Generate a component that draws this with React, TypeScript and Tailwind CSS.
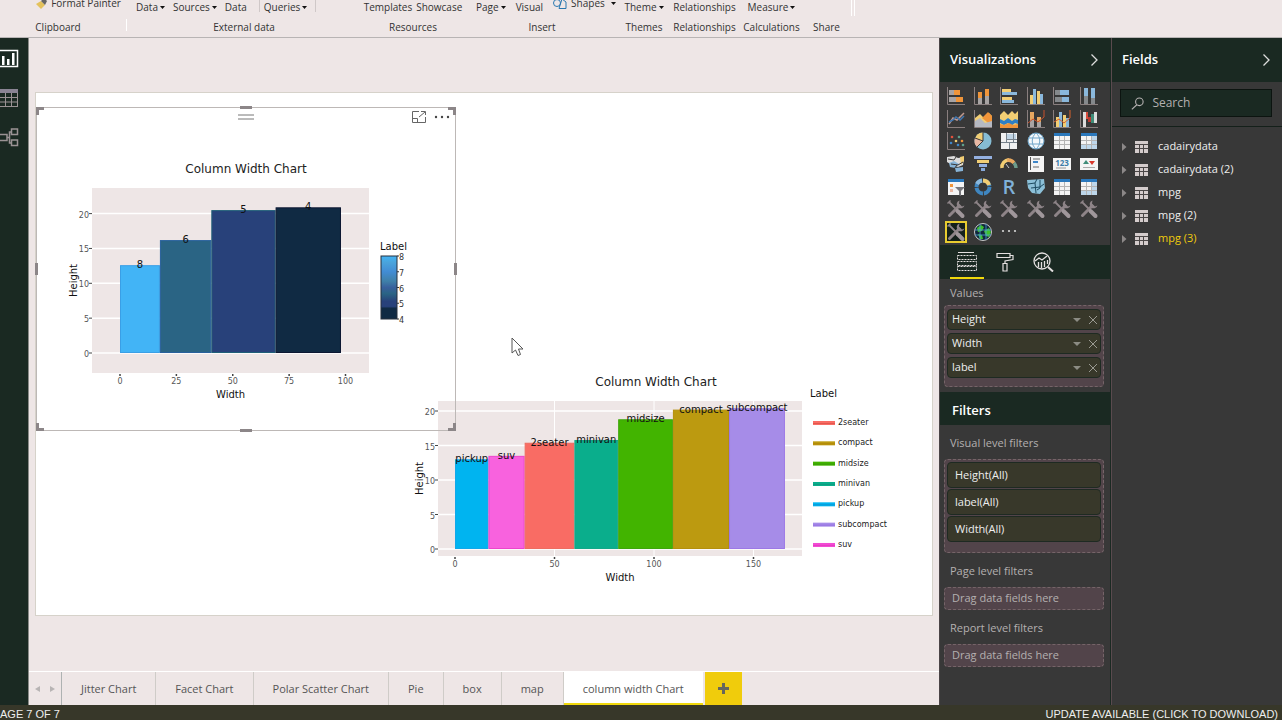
import type { ReactNode } from "react";

type Bar = { label: string; from: number; to: number; value: number; fill: string; stroke: string };

type ChartProps = {
  bars: Bar[];
  width: number;
  height: number;
  plot: { x: number; y: number; w: number; h: number };
  origin: { x: number; y: number };
  scale: { x: number; y: number };
  xTicks: number[];
  verticalGrid?: boolean;
  children?: ReactNode;
};

const cylinderBars: Bar[] = [
  { label: "8", from: 0, to: 17.7, value: 12.6, fill: "#42b4f6", stroke: "#3a9fe6" },
  { label: "6", from: 17.7, to: 40.5, value: 16.2, fill: "#2a6484", stroke: "#28609c" },
  { label: "5", from: 40.5, to: 69, value: 20.5, fill: "#28417a", stroke: "#1f5f78" },
  { label: "4", from: 69, to: 98, value: 20.9, fill: "#102a43", stroke: "#0c1732" },
];

const classBars: Bar[] = [
  { label: "pickup", from: 0, to: 16.8, value: 13, fill: "#00b4f0", stroke: "#10a8ea" },
  { label: "suv", from: 16.8, to: 35, value: 13.5, fill: "#f862de", stroke: "#ee44cc" },
  { label: "2seater", from: 35, to: 60, value: 15.4, fill: "#f96c64", stroke: "#ee6c60" },
  { label: "minivan", from: 60, to: 82, value: 15.8, fill: "#0aae8c", stroke: "#12a888" },
  { label: "midsize", from: 82, to: 109.5, value: 18.8, fill: "#42b400", stroke: "#3ea60a" },
  { label: "compact", from: 109.5, to: 137.7, value: 20.2, fill: "#bc9a10", stroke: "#b4900c" },
  { label: "subcompact", from: 137.7, to: 165.8, value: 20.4, fill: "#a68ce8", stroke: "#9c78e6" },
];

const legend = [
  { name: "2seater", fill: "#f96c64", edge: "#e2584e" },
  { name: "compact", fill: "#bc9a10", edge: "#b08408" },
  { name: "midsize", fill: "#42b400", edge: "#3a9a08" },
  { name: "minivan", fill: "#0aae8c", edge: "#109c80" },
  { name: "pickup", fill: "#00b4f0", edge: "#0e98d4" },
  { name: "subcompact", fill: "#a68ce8", edge: "#9670e2" },
  { name: "suv", fill: "#f24ad4", edge: "#e63cc4" },
];

function ColumnWidthChart({ bars, width, height, plot, origin, scale, xTicks, verticalGrid, children }: ChartProps) {
  const px = (v: number) => origin.x + v * scale.x;
  const py = (v: number) => origin.y - v * scale.y;
  const middle = plot.x + plot.w / 2;
  return (
    <svg
      width={width}
      height={height}
      viewBox={`0 0 ${width} ${height}`}
      className="block font-['DejaVu_Sans',sans-serif]"
      role="img"
      aria-label="Column Width Chart"
    >
      <text x={width / 2} y={plot.y - 15} textAnchor="middle" className="fill-[#222] text-[12px]">
        Column Width Chart
      </text>
      <rect x={plot.x} y={plot.y} width={plot.w} height={plot.h} fill="#eee6e6" />
      {[0, 5, 10, 15, 20].map((t) => (
        <g key={t}>
          <path d={`M${plot.x} ${py(t)}h${plot.w}`} stroke="#fff" strokeWidth="1.5" />
          <path d={`M${plot.x - 3} ${py(t)}h3`} stroke="#444" />
          <text x={plot.x - 3} y={py(t) + 4} textAnchor="end" className="fill-[#555] text-[8px]">
            {t}
          </text>
        </g>
      ))}
      {xTicks.map((t) => (
        <g key={t}>
          {verticalGrid && t > 0 && <path d={`M${px(t)} ${plot.y}v${plot.h}`} stroke="#fff" />}
          <path d={`M${px(t)} ${plot.y + plot.h + 1}v2`} stroke="#444" strokeWidth="1.5" />
          <text x={px(t)} y={plot.y + plot.h + 11} textAnchor="middle" className="fill-[#555] text-[8px]">
            {t}
          </text>
        </g>
      ))}
      {bars.map((b) => (
        <rect
          key={b.label}
          x={px(b.from) + 0.5}
          y={py(b.value) + 0.5}
          width={(b.to - b.from) * scale.x - 1}
          height={b.value * scale.y - 1}
          fill={b.fill}
          stroke={b.stroke}
        />
      ))}
      {bars.map((b) => (
        <text
          key={b.label}
          x={px((b.from + b.to) / 2)}
          y={py(b.value) + 3}
          textAnchor="middle"
          className="fill-[#111] text-[10px]"
        >
          {b.label}
        </text>
      ))}
      <text x={middle} y={plot.y + plot.h + 25} textAnchor="middle" className="fill-[#111] text-[10px]">
        Width
      </text>
      <text
        transform={`translate(${plot.x - 15} ${plot.y + plot.h / 2}) rotate(-90)`}
        textAnchor="middle"
        className="fill-[#111] text-[10px]"
      >
        Height
      </text>
      {children}
    </svg>
  );
}

/* ---------- visual gallery icons ---------- */

const O = "#f0953a";
const Y = "#f2ce74";
const B = "#8ab8dc";
const G = "#a8a4a4";
const axis = <path d="M.5 0v17.5H18" fill="none" stroke="#8a7f7f" />;
const sheet = (
  <>
    <path d="M1 1h16v16H1z" fill="#f4f4f4" />
    <path d="M1 1h16v3H1z" fill="#2a78bc" />
  </>
);
const tools = (
  <>
    <path d="M2.5 15.5 12 6" stroke="#8e8488" strokeWidth="3" strokeLinecap="round" />
    <path d="M12.5 .5a4 4 0 1 0 5 5l-2.500 1-3-3z" fill="#8e8488" />
    <path d="m2 2 7 7" stroke="#8e8488" strokeWidth="1.8" />
    <path d="m10.500 11 5 5" stroke="#a0979b" strokeWidth="4" strokeLinecap="round" />
    <path d="M.5 3.500 3.500 .5" stroke="#8e8488" strokeWidth="1.500" />
  </>
);

const gallery: { name: string; art: ReactNode }[] = [
  {
    name: "Stacked bar chart",
    art: (<>{axis}<path d="M2 3h5v5H2zM2 10h7v5H2z" fill={G} /><path d="M7 3h6v5H7zM9 10h7v5H9z" fill={O} /></>),
  },
  {
    name: "Stacked column chart",
    art: (<>{axis}<path d="M4 11h4v6H4zM11 9h4v8h-4z" fill={G} /><path d="M4 5h4v6H4zM11 2h4v7h-4z" fill={O} /></>),
  },
  {
    name: "Clustered bar chart",
    art: (<>{axis}<path d="M2 2h9v3H2zM2 10h10v3H2z" fill={Y} /><path d="M2 5h15v3H2zM2 13h12v3H2z" fill={B} /></>),
  },
  {
    name: "Clustered column chart",
    art: (<>{axis}<path d="M3 8h3v9H3zM10 4h3v13h-3z" fill={Y} /><path d="M6 2h3v15H6zM13 7h3v10h-3z" fill={B} /></>),
  },
  {
    name: "100% stacked bar chart",
    art: (<>{axis}<path d="M2 3h5v5H2zM2 10h7v5H2z" fill="#85898c" /><path d="M7 3h9v5H7zM9 10h7v5H9z" fill={B} /></>),
  },
  {
    name: "100% stacked column chart",
    art: (<>{axis}<path d="M4 9h4v8H4zM11 11h4v6h-4z" fill="#85898c" /><path d="M4 1h4v8H4zM11 1h4v10h-4z" fill={B} /></>),
  },
  {
    name: "Line chart",
    art: (
      <>
        {axis}
        <path d="m2 14 4-6 4 2 7-7" fill="none" stroke="#c09a90" strokeWidth="1.5" />
        <path d="m2 12 4-2 3-3 4 3 4-4" fill="none" stroke="#3f76b0" strokeWidth="1.5" />
      </>
    ),
  },
  {
    name: "Area chart",
    art: (
      <>
        {axis}
        <path d="m1 8 5-4 5 5 4-6 3 3v11H1z" fill={Y} />
        <path d="m8 8 6-6 4 4v10z" fill={O} />
        <path d="m1 11 5-3 5 5 7-2v6H1z" fill="#b5b9c2" />
      </>
    ),
  },
  {
    name: "Stacked area chart",
    art: (
      <>
        <path d="m0 5 4-4 4 4 4-4 3 3 3-3v16H0z" fill={Y} />
        <path d="m0 9 4 2 4-3 4 3 3-2 3 1v4l-3-1-4 3-3-3-4 2-4-2z" fill="#2f7fc4" />
        <path d="m0 14 4 1 5-2 4 2 5-1v4H0z" fill={O} />
      </>
    ),
  },
  {
    name: "Line and stacked column chart",
    art: (
      <>
        {axis}
        <path d="M3 10h4v7H3zM10 12h4v5h-4z" fill={G} />
        <path d="M3 2h4v8H3zM10 7h4v5h-4z" fill="#e8a860" />
        <path d="m1 13 5-4 5 3 6-5V0" fill="none" stroke="#c8512c" />
      </>
    ),
  },
  {
    name: "Line and clustered column chart",
    art: (
      <>
        {axis}
        <path d="M3 7h3v10H3zM10 5h3v12h-3z" fill={Y} />
        <path d="M6 2h3v15H6zM13 8h3v9h-3z" fill={B} />
        <path d="m1 12 5-3 5 4 6-5V0" fill="none" stroke="#d8622c" />
      </>
    ),
  },
  {
    name: "Waterfall chart",
    art: (
      <>
        {axis}
        <path d="M3 2h3v15H3zM14 2h3v11h-3z" fill="#dcdcdc" />
        <path d="M6 2h2v7H6z" fill="#d64a3c" />
        <path d="M8 7h3v5H8z" fill="#b83830" />
        <path d="M11 4h3v9h-3z" fill="#3f8c78" />
      </>
    ),
  },
  {
    name: "Scatter chart",
    art: (
      <>
        {axis}
        <circle cx="5" cy="5" r="1.300" fill="#e2523e" />
        <circle cx="12" cy="5" r="1.300" fill="#5fa08c" />
        <circle cx="9" cy="9" r="1.300" fill={Y} />
        <circle cx="4" cy="11" r="1.300" fill="#3f86c8" />
        <circle cx="15" cy="9" r="1.300" fill={O} />
        <circle cx="11" cy="13" r="1.300" fill="#3f86c8" />
        <circle cx="16" cy="13" r="1.300" fill="#5fa08c" />
      </>
    ),
  },
  {
    name: "Pie chart",
    art: (
      <>
        <circle cx="9" cy="9" r="8.500" fill="#86bcd4" />
        <path d="M9 9V.5A8.500 8.500 0 0 0 1 7z" fill={Y} />
        <path d="M9 9 1 6a8.500 8.500 0 0 0 2 9z" fill="#e8b8a4" />
        <path d="M9 0v9L3 15M9 9 1 6" fill="none" stroke="#383838" />
      </>
    ),
  },
  {
    name: "Treemap",
    art: (
      <>
        <path d="M1 1h16v16H1z" fill="#f0f0f0" />
        <path d="M7 2h9v5H7z" fill="#c0d4e4" />
        <path d="M6.500 1v9M1 10.500h16M9.500 10v7M13.500 1v9M6 7.500h11" stroke="#77828c" />
      </>
    ),
  },
  {
    name: "Map",
    art: (
      <>
        <circle cx="9" cy="9" r="8" fill="#f4f8fb" stroke="#6ea4c8" />
        <path d="M2 6h14M2 12h14M9 1C4 5 4 13 9 17M9 1c5 4 5 12 0 16" fill="none" stroke="#6ea4c8" />
      </>
    ),
  },
  {
    name: "Table",
    art: (<>{sheet}<path d="M6.500 4v13M11.500 4v13M1 8.500h16M1 12.500h16" stroke="#b4b4b4" /></>),
  },
  {
    name: "Matrix",
    art: (<>{sheet}<path d="M11 4h6v13h-6zM1 13h16v4H1z" fill="#bdd6ea" /><path d="M6.500 4v13M11.500 4v13M1 8.500h16M1 12.500h16" stroke="#b4b4b4" /></>),
  },
  {
    name: "Filled map",
    art: (
      <>
        <path d="m0 2 7-1 4 2 6-1-1 8-5 2-6-2-5-3z" fill="#dcdcdc" />
        <path d="m2 8 5-2 5 3-4 4-5-1zM8 13l8-1v4l-7 1z" fill="#88b4d8" />
        <path d="m13 2 4-1v5l-3 4z" fill={Y} />
        <path d="m1 4 6 1 2-3M4 9l7 1 5-3M7 14l3-4" fill="none" stroke="#383838" />
      </>
    ),
  },
  {
    name: "Funnel",
    art: (<><path d="M0 1h18v3H0zM5 9h8v3H5z" fill="#94b0e0" /><path d="M3 5h12v3H3z" fill={Y} /><path d="M7 13h4v3H7z" fill="#86a8d8" /></>),
  },
  {
    name: "Gauge",
    art: (
      <>
        <path d="M2 13a7 7 0 0 1 7-8" fill="none" stroke={Y} strokeWidth="3.500" />
        <path d="M7 5.300A7 7 0 0 1 14 8" fill="none" stroke="#e8a860" strokeWidth="3.500" />
        <path d="M14 8a7 7 0 0 1 2 5" fill="none" stroke="#6c9c8c" strokeWidth="3.500" />
        <path d="m9 13-3-4" stroke="#ccc" />
      </>
    ),
  },
  {
    name: "Multi-row card",
    art: (<><path d="M1 1h16v16H1z" fill="#f4f4f4" /><path d="M3.500 2v13" stroke="#555" /><path d="M6 4h7M6 12h6" stroke="#666" /><path d="M6 7h5" stroke="#3f86c8" strokeWidth="2" /></>),
  },
  {
    name: "Card",
    art: (
      <>
        <path d="M0 3h18v12H0z" fill="#f4f4f4" />
        <text x="9" y="11" textAnchor="middle" className="fill-[#3c7ca8] font-['Open_Sans',sans-serif] text-[8px] font-bold">123</text>
        <path d="M3 13h10" stroke="#999" />
      </>
    ),
  },
  {
    name: "KPI",
    art: (<><path d="M0 3h18v12H0z" fill="#f4f4f4" /><path d="m3 9 3-4 3 4z" fill="#3f8c78" /><path d="m9 6 6 0-3 4z" fill="#d8382c" /><path d="M3 12.500h12" stroke="#aaa" /></>),
  },
  {
    name: "Slicer",
    art: (
      <>
        {sheet}
        <path d="M3 6h3v3H3z" fill={O} />
        <path d="M3 11h3v3H3z" fill="#e8b8a4" />
        <path d="M8 9h10l-4 4v5l-2-1v-4z" fill="#77777c" />
      </>
    ),
  },
  {
    name: "Donut chart",
    art: (
      <>
        <circle cx="9" cy="9" r="6.500" fill="none" stroke="#3f86c0" strokeWidth="4" strokeDasharray="9 1" />
        <path d="M9 2.500A6.500 6.500 0 0 1 15 7" fill="none" stroke={Y} strokeWidth="4" />
        <path d="M3 6a6.500 6.500 0 0 1 5-3.500" fill="none" stroke={B} strokeWidth="4" />
      </>
    ),
  },
  {
    name: "R script visual",
    art: (
      <text x="9" y="16" textAnchor="middle" className="fill-[#7fb0d8] font-['Open_Sans',sans-serif] text-[20px] font-semibold">R</text>
    ),
  },
  {
    name: "Shape map",
    art: (<><path d="m0 2 17-1 1 9-5 6-8-1-4-5z" fill="#8cc0d8" /><path d="m1 6 7-1 2-4M4 10l9-1 4-3M8 5l1 10M13 2v8l-3 2" fill="none" stroke="#1d4a60" /></>),
  },
  {
    name: "Table preview",
    art: (<>{sheet}<path d="M6.500 4v13M11.500 4v13M1 8.500h16M1 12.500h16" stroke="#b4b4b4" /></>),
  },
  {
    name: "Matrix preview",
    art: (<>{sheet}<path d="M11 4h6v13h-6zM1 13h16v4H1z" fill="#bdd6ea" /><path d="M6.500 4v13M11.500 4v13M1 8.500h16M1 12.500h16" stroke="#b4b4b4" /></>),
  },
  ...[1, 2, 3, 4, 5, 6].map((n) => ({ name: `Custom visual ${n}`, art: tools })),
  {
    name: "Column width visual",
    art: (<><path d="M0 0h18v18H0z" fill="#14201b" />{tools}</>),
  },
  {
    name: "Globe map",
    art: (
      <>
        <circle cx="9" cy="9" r="8.500" fill="#10283c" stroke="#c8c8c8" />
        <path d="m3 5 4-3 3 2-2 4-4 1zM10 8l5-3 2 4-2 5-3-1zM4 11l4 1 1 4-3 0z" fill="#3fc02a" />
        <path d="M1 7h16M1 12h16M6 1v16M12 1v16" stroke="#4ba0d8" strokeWidth=".8" />
      </>
    ),
  },
  {
    name: "More visuals",
    art: (<g fill="#d8d8d8"><circle cx="3" cy="8" r="1.100" /><circle cx="9" cy="8" r="1.100" /><circle cx="15" cy="8" r="1.100" /></g>),
  },
];

/* ---------- ribbon ---------- */

function Caret() {
  return (
    <svg width="5" height="3" viewBox="0 0 5 3" className="ml-0.5 shrink-0">
      <path d="M0 0h5L2.500 3z" fill="#111" />
    </svg>
  );
}

function RibbonButton({ children, menu }: { children: ReactNode; menu?: boolean }) {
  return (
    <button className="flex items-center whitespace-nowrap">
      {children}
      {menu && <Caret />}
    </button>
  );
}

function RibbonGroup({ title, className, children }: { title: string; className: string; children?: ReactNode }) {
  return (
    <div className={`flex shrink-0 flex-col ${className}`}>
      <div className="flex h-[19px] items-start justify-center leading-[15px]">{children}</div>
      <div className="text-center leading-4">{title}</div>
    </div>
  );
}

function Ribbon() {
  return (
    <header className="flex h-[38px] shrink-0 overflow-hidden border-b border-[#b8b4b4] bg-[#eee6e6] text-[10px] text-[#333]">
      <RibbonGroup title="Clipboard" className="w-[116px]">
        <button className="-mt-1 ml-10 flex items-center gap-1 whitespace-nowrap">
          <svg width="12" height="12" viewBox="0 0 12 12">
            <path d="m1 6 5-3 4 4-4 4z" fill="#e4c25c" />
            <path d="m6 3 3-3 3 3-2 4z" fill="#666" />
          </svg>
          Format Painter
        </button>
      </RibbonGroup>
      <i className="mt-[19px] mr-[-1px] ml-[10px] h-3 w-px shrink-0 bg-white" />
      <RibbonGroup title="External data" className="w-[236px]">
        <div className="mr-auto ml-2.5 flex gap-2">
          <RibbonButton menu>Data</RibbonButton>
          <RibbonButton menu>Sources</RibbonButton>
          <RibbonButton>Data</RibbonButton>
          <i className="ml-1 h-3 w-px bg-[#cfc8c8]" />
          <div className="-ml-1">
            <RibbonButton menu>Queries</RibbonButton>
          </div>
          <i className="h-3 w-px bg-[#cfc8c8]" />
        </div>
      </RibbonGroup>
      <RibbonGroup title="Resources" className="w-[102px]">
        <div className="flex gap-1">
          <RibbonButton>Templates</RibbonButton>
          <RibbonButton>Showcase</RibbonButton>
        </div>
      </RibbonGroup>
      <RibbonGroup title="Insert" className="w-[156px]">
        <div className="mr-auto ml-3 flex items-start gap-2.5">
          <RibbonButton menu>Page</RibbonButton>
          <RibbonButton>Visual</RibbonButton>
          <button className="-mt-1 flex items-center gap-1">
            <svg width="14" height="12" viewBox="0 0 14 12" fill="none" stroke="#2a78b0">
              <circle cx="4" cy="5" r="3.500" />
              <path d="M6 10.500h7V4L9 1z" />
            </svg>
            Shapes
            <Caret />
          </button>
        </div>
      </RibbonGroup>
      <RibbonGroup title="Themes" className="w-12">
        <RibbonButton menu>Theme</RibbonButton>
      </RibbonGroup>
      <RibbonGroup title="Relationships" className="w-[73px]">
        <RibbonButton>Relationships</RibbonButton>
      </RibbonGroup>
      <RibbonGroup title="Calculations" className="w-[61px]">
        <RibbonButton menu>Measure</RibbonButton>
      </RibbonGroup>
      <RibbonGroup title="Share" className="w-[49px]" />
      <i className="h-4 w-1 border-x border-white" />
    </header>
  );
}

/* ---------- left navigation ---------- */

function ViewSwitcher() {
  return (
    <nav className="flex w-[29px] shrink-0 flex-col items-start gap-5 border-r border-[#8a8a88] bg-[#1a2922] pt-[11px]">
      <button aria-label="Report view">
        <svg width="19" height="19" viewBox="0 0 19 19">
          <path d="M0 1.500h17.500v16H0" fill="none" stroke="#fff" strokeWidth="1.500" />
          <path d="M2 7h2.500v9H2zM7 10h2.500v6H7zM12 4h2.500v12H12z" fill="#fff" />
        </svg>
      </button>
      <button aria-label="Data view">
        <svg width="19" height="20" viewBox="0 0 19 20">
          <path d="M0 1h18v4H0z" fill="#8a8494" />
          <path d="M0 9.500h18M0 14h18M0 18.500h18M5.500 5v14M11.500 5v14M17.500 5v14" stroke="#9a9294" />
        </svg>
      </button>
      <button aria-label="Relationship view">
        <svg width="19" height="19" viewBox="0 0 19 19" fill="none" stroke="#9a9294" strokeWidth="1.500">
          <path d="M0 6.500h7v6H0M11.500 1h6v5.500h-6zM11.500 12h6v5.500h-6zM7 9.500h2.500V4h2M9.500 9.500V15h2" />
        </svg>
      </button>
    </nav>
  );
}

/* ---------- report page ---------- */

function SelectionHandles() {
  return (
    <div className="pointer-events-none absolute inset-0 border border-[#bdb8b6]">
      <i className="absolute -top-px -left-px size-2 border-t-3 border-l-3 border-[#8c8688]" />
      <i className="absolute -top-px -right-px size-2 border-t-3 border-r-3 border-[#8c8688]" />
      <i className="absolute -bottom-px -left-px size-2 border-b-3 border-l-3 border-[#8c8688]" />
      <i className="absolute -right-px -bottom-px size-2 border-r-3 border-b-3 border-[#8c8688]" />
      <i className="absolute -top-0.5 left-1/2 h-[3px] w-3 -translate-x-1/2 bg-[#8c8688]" />
      <i className="absolute -bottom-0.5 left-1/2 h-[3px] w-3 -translate-x-1/2 bg-[#8c8688]" />
      <i className="absolute top-1/2 -left-0.5 h-3 w-[3px] -translate-y-1/2 bg-[#8c8688]" />
      <i className="absolute top-1/2 -right-0.5 h-3 w-[3px] -translate-y-1/2 bg-[#8c8688]" />
    </div>
  );
}

function ReportPage() {
  return (
    <div className="relative flex-1 border border-[#d6d2ca] bg-white">
      <div className="absolute top-[269px] left-[364px]">
        <ColumnWidthChart
          bars={classBars}
          width={512}
          height={240}
          plot={{ x: 38, y: 39, w: 364, h: 155 }}
          origin={{ x: 55, y: 187 }}
          scale={{ x: 1.99, y: 6.9 }}
          xTicks={[0, 50, 100, 150]}
          verticalGrid
        >
          <text x="410" y="35" className="fill-[#111] text-[10px]">
            Label
          </text>
          {legend.map((item, i) => (
            <g key={item.name} transform={`translate(413 ${59 + i * 20.33})`}>
              <rect width="22" height="4" fill={item.fill} />
              <rect y="2" width="22" height="1" fill={item.edge} />
              <text x="25" y="4" className="fill-[#222] text-[8px]">
                {item.name}
              </text>
            </g>
          ))}
        </ColumnWidthChart>
      </div>

      <div className="absolute top-[14px] left-0">
        <ColumnWidthChart
          bars={cylinderBars}
          width={420}
          height={324}
          plot={{ x: 56, y: 81, w: 277, h: 185 }}
          origin={{ x: 84, y: 246 }}
          scale={{ x: 2.255, y: 6.97 }}
          xTicks={[0, 25, 50, 75, 100]}
        >
          <defs>
            <linearGradient id="ramp" x1="0" y1="0" x2="0" y2="1">
              <stop offset="0" stopColor="#42b4f6" />
              <stop offset=".1" stopColor="#4aa4dc" />
              <stop offset=".25" stopColor="#428cd4" />
              <stop offset=".4" stopColor="#3f80a8" />
              <stop offset=".5" stopColor="#38609c" />
              <stop offset=".6" stopColor="#2a6484" />
              <stop offset=".72" stopColor="#28417a" />
              <stop offset=".8" stopColor="#28417a" />
              <stop offset=".83" stopColor="#102a43" />
              <stop offset="1" stopColor="#102a43" />
            </linearGradient>
          </defs>
          <text x="344" y="143" className="fill-[#111] text-[10px]">
            Label
          </text>
          <rect x="345" y="149" width="16" height="63" fill="url(#ramp)" stroke="#28303c" />
          {[8, 7, 6, 5, 4].map((n, i) => (
            <g key={n}>
              <path d={`M361 ${149 + i * 15.75}h2`} stroke="#333" />
              <text x="363" y={153 + i * 15.75} className="fill-[#333] text-[8px]">
                {n}
              </text>
            </g>
          ))}
        </ColumnWidthChart>
        <SelectionHandles />
        <svg width="16" height="6" viewBox="0 0 16 6" className="absolute top-[7px] left-1/2 -translate-x-1/2">
          <path d="M0 1h16M0 5h16" stroke="#777" />
        </svg>
        <div className="absolute top-1 right-1.5 flex items-center gap-2">
          <button aria-label="Focus mode">
            <svg width="14" height="12" viewBox="0 0 14 12" fill="none" stroke="#666">
              <path d="M7 .5H.5v11h13V6M.5 7.500h5v4M7 6l6-5M9 .5h4.500V4" />
            </svg>
          </button>
          <button aria-label="More options">
            <svg width="16" height="12" viewBox="0 0 16 12" fill="#444">
              <circle cx="2" cy="6" r="1.200" />
              <circle cx="8" cy="6" r="1.200" />
              <circle cx="14" cy="6" r="1.200" />
            </svg>
          </button>
        </div>
      </div>

      <svg width="14" height="20" viewBox="0 0 14 20" className="absolute top-[244px] left-[475px]">
        <path d="M1 1v15l3.500-3 2.500 5.500 2.500-1L7.500 12H12z" fill="#fff" stroke="#555" />
      </svg>
    </div>
  );
}

const pages = ["Jitter Chart", "Facet Chart", "Polar Scatter Chart", "Pie", "box", "map"];

function PageTabs() {
  return (
    <div className="flex h-[34px] shrink-0 border-t border-white bg-[#eee6e6] text-[11px] font-medium text-[#555]">
      <div className="flex w-[33px] items-center justify-center gap-2.5 border-r border-[#aeb2b2]">
        <button aria-label="Previous page">
          <svg width="5" height="6" viewBox="0 0 5 6">
            <path d="M5 0v6L0 3z" fill="#b8b4b4" />
          </svg>
        </button>
        <button aria-label="Next page">
          <svg width="5" height="6" viewBox="0 0 5 6">
            <path d="M0 0v6l5-3z" fill="#b8b4b4" />
          </svg>
        </button>
      </div>
      {pages.map((page) => (
        <button key={page} className="border-r border-[#cfccc8] px-[19px] pt-0.5 whitespace-nowrap">
          {page}
        </button>
      ))}
      <button className="border-b-2 border-[#f0d80c] bg-white px-[19px] pt-1 whitespace-nowrap">
        column width Chart
      </button>
      <button aria-label="New page" className="ml-0.5 flex w-[37px] items-center justify-center bg-[#f0cc0c]">
        <svg width="11" height="11" viewBox="0 0 11 11">
          <path d="M5.500 0v11M0 5.500h11" stroke="#66665c" strokeWidth="3" />
        </svg>
      </button>
    </div>
  );
}

/* ---------- right panes ---------- */

function PaneHeader({ title }: { title: string }) {
  return (
    <div className="flex h-[44px] shrink-0 items-center justify-between bg-[#1a2922] pr-3 pl-2.5">
      <h2 className="text-[13px] font-semibold text-white">{title}</h2>
      <button aria-label={`Collapse ${title}`}>
        <svg width="7" height="12" viewBox="0 0 7 12" fill="none" stroke="#ddd" strokeWidth="1.300">
          <path d="m.5.5 5.500 5.500-5.500 5.500" />
        </svg>
      </button>
    </div>
  );
}

const well = "mr-1.5 ml-1 rounded-sm border border-dashed border-[#756468] bg-[#52444a]";
const chip = "flex items-center rounded-sm border border-[#1e2a22] bg-[#38382a] text-[#eee]";

function VisualizationsPane() {
  return (
    <aside className="flex w-[172px] shrink-0 flex-col border-r border-[#1a2922] border-l border-l-[#4a4446] bg-[#383838] text-[11px] text-[#b4b0b0]">
      <PaneHeader title="Visualizations" />
      <div className="mt-[3px] ml-[3px] grid h-[158px] w-[159px] shrink-0 grid-cols-6 grid-rows-7 place-items-center">
        {gallery.map((g) => (
          <button
            key={g.name}
            aria-label={g.name}
            className={g.name === "Column width visual" ? "outline-2 outline-[#e8cc30]" : ""}
          >
            <svg width="18" height="18" viewBox="0 0 18 18" className="overflow-visible">
              {g.art}
            </svg>
          </button>
        ))}
      </div>
      <div className="mt-0.5 flex h-[34px] shrink-0 gap-1 bg-[#1a2922] pl-2.5">
        <button aria-label="Fields" className="flex w-[34px] items-center justify-center border-b-2 border-[#f0d80c]">
          <svg width="20" height="19" viewBox="0 0 20 19" fill="none" stroke="#e4e0e0">
            <path d="M1 .5h16" />
            <path d="M.5 3.500h19v4H.5zM.5 9.500h19v4H.5zM.5 14.500h19v4H.5z" strokeDasharray="2 1" />
          </svg>
        </button>
        <button aria-label="Format" className="flex w-[34px] items-center justify-center">
          <svg width="18" height="20" viewBox="0 0 18 20" fill="none" stroke="#e4e0e0" strokeWidth="1.200">
            <path d="M1 1.500h13v4H1zM14 3.500h3v4L9 9v2.500M7 11.500h4V19H7z" />
          </svg>
        </button>
        <button aria-label="Analytics" className="flex w-[34px] items-center justify-center">
          <svg width="21" height="20" viewBox="0 0 21 20" fill="none" stroke="#e4e0e0" strokeWidth="1.300">
            <circle cx="9" cy="9" r="8" />
            <path d="m2 9 4-3 3 2 5-4M5.500 10v5M8.500 10v6M11.500 9v6M14.500 8v4" />
            <path d="m15 15 5 4.500" strokeWidth="2" />
          </svg>
        </button>
      </div>

      <div className="mt-1.5 pl-2.5 leading-4">Values</div>
      <div className={`${well} mt-1 flex flex-col gap-[3px] px-0.5 pt-[3px] pb-2`}>
        {["Height", "Width", "label"].map((field) => (
          <div key={field} className={`${chip} h-[21px] pr-[3px] pl-1`}>
            <span className="flex-1">{field}</span>
            <button aria-label={`${field} options`}>
              <svg width="8" height="4" viewBox="0 0 8 4">
                <path d="M0 0h8L4 4z" fill="#8c8c84" />
              </svg>
            </button>
            <button aria-label={`Remove ${field}`} className="ml-2">
              <svg width="8" height="8" viewBox="0 0 8 8" stroke="#9a9a92">
                <path d="m0 0 8 8M8 0 0 8" />
              </svg>
            </button>
          </div>
        ))}
      </div>

      <h2 className="mt-[5px] flex h-[33px] shrink-0 items-center bg-[#1a2922] pt-1 pl-3 text-[13px] font-semibold text-white">
        Filters
      </h2>
      <div className="mt-2.5 pl-2.5 leading-4">Visual level filters</div>
      <div className={`${well} mt-2 flex flex-col gap-px px-0.5 pt-0.5 pb-2.5`}>
        {["Height(All)", "label(All)", "Width(All)"].map((f) => (
          <button key={f} className={`${chip} h-[26px] pl-[7px]`}>
            {f}
          </button>
        ))}
      </div>
      {["Page level filters", "Report level filters"].map((title) => (
        <div key={title} className="mt-2.5">
          <div className="pl-2.5 leading-4">{title}</div>
          <div className={`${well} mt-2 flex h-[23px] items-center pl-[7px]`}>Drag data fields here</div>
        </div>
      ))}
    </aside>
  );
}

const tables = ["cadairydata", "cadairydata (2)", "mpg", "mpg (2)", "mpg (3)"];

function FieldsPane() {
  return (
    <aside className="flex w-[171px] shrink-0 flex-col border-l border-[#5a4a4e] bg-[#383838] text-[11px] text-[#eee]">
      <PaneHeader title="Fields" />
      <div className="border-b border-[#14201a] pt-[7px] pr-2.5 pb-[9px] pl-2">
        <label className="flex h-7 items-center gap-2 border border-[#0c1410] bg-[#1a2922] px-2.5">
          <svg width="16" height="15" viewBox="0 0 16 15" fill="none" stroke="#b8b4b4" strokeWidth="1.300">
            <circle cx="10" cy="5.500" r="4.500" />
            <path d="m7 9-6 5.500" />
          </svg>
          <input
            aria-label="Search"
            placeholder="Search"
            className="w-full bg-transparent text-[12px] outline-none placeholder:text-[#b4b0b0]"
          />
        </label>
      </div>
      <ul className="mt-2 flex flex-col">
        {tables.map((name) => (
          <li key={name} className="h-[23px]">
            <button className="flex h-full w-full items-center pl-2.5">
              <svg width="5" height="8" viewBox="0 0 5 8">
                <path d="M0 0v8l4.500-4z" fill="#8c8888" />
              </svg>
              <svg width="13" height="12" viewBox="0 0 13 12" className="ml-2">
                <path d="M0 0h13v12H0z" fill="#d4cccc" />
                <path d="M0 3.500h13M0 7.500h13M4.500 3v9M8.500 3v9" stroke="#4a4646" />
              </svg>
              <span className={`ml-2.5 ${name === "mpg (3)" ? "text-[#f0cc0c]" : ""}`}>{name}</span>
            </button>
          </li>
        ))}
      </ul>
    </aside>
  );
}

export default function App() {
  return (
    <div className="flex h-screen flex-col overflow-hidden bg-[#eee6e6] font-['Open_Sans',sans-serif]">
      <Ribbon />
      <div className="flex min-h-0 flex-1">
        <ViewSwitcher />
        <main className="flex min-w-0 flex-1 flex-col">
          <div className="flex min-h-0 flex-1 flex-col px-1.5 pt-[54px] pb-[55px]">
            <ReportPage />
          </div>
          <PageTabs />
        </main>
        <VisualizationsPane />
        <FieldsPane />
      </div>
      <footer className="flex h-[15px] shrink-0 items-center justify-between overflow-hidden bg-[#373729] pt-1 pr-1 font-['Liberation_Sans',Arial,sans-serif] text-[11px] leading-[15px] text-[#eee]">
        <span>AGE 7 OF 7</span>
        <button>UPDATE AVAILABLE (CLICK TO DOWNLOAD)</button>
      </footer>
    </div>
  );
}
